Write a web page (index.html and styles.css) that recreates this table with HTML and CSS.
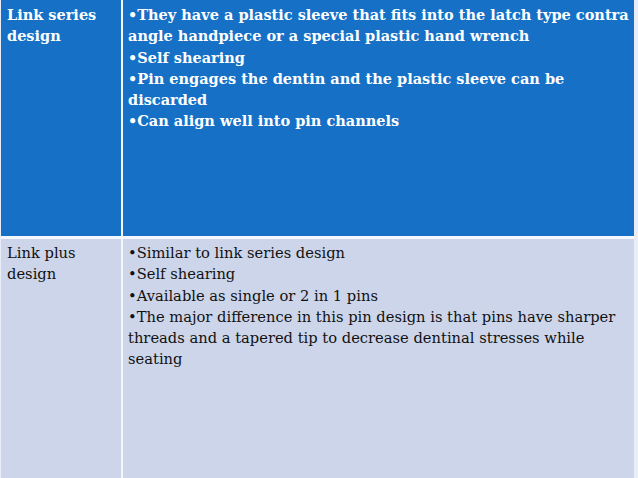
FILE: index.html
```html
<!DOCTYPE html>
<html>
<head>
<meta charset="utf-8">
<link rel="stylesheet" href="styles.css">
</head>
<body>
<div class="table">
  <div class="cell head first">Link series design</div>
  <div class="cell head">
    <div>•They have a plastic sleeve that fits into the latch type contra angle handpiece or a special plastic hand wrench</div>
    <div>•Self shearing</div>
    <div>•Pin engages the dentin and the plastic sleeve can be discarded</div>
    <div>•Can align well into pin channels</div>
  </div>
  <div class="cell body first">Link plus design</div>
  <div class="cell body">
    <div>•Similar to link series design</div>
    <div>•Self shearing</div>
    <div>•Available as single or 2 in 1 pins</div>
    <div>•The major difference in this pin design is that pins have sharper threads and a tapered tip to decrease dentinal stresses while seating</div>
  </div>
</div>
</body>
</html>
```
FILE: styles.css
```css
html, body {
  margin: 0;
  padding: 0;
  background: #e8edf7;
}
.table {
  display: grid;
  grid-template-columns: 120px 511px;
  grid-template-rows: 236px 240px;
  column-gap: 2px;
  row-gap: 3px;
  margin-left: 1px;
  width: 633px;
  background: #f4f7fc;
  font-family: "DejaVu Serif", serif;
  line-height: 21.3px;
}
.cell {
  padding: 4px 4px 0 5px;
  overflow: hidden;
}
.first {
  padding-left: 6px;
}
.head {
  background: #1570c6;
  color: #ffffff;
  font-weight: bold;
  font-size: 14.5px;
}
.body {
  background: #cdd5ea;
  color: #111;
  font-size: 14.7px;
  padding-top: 3px;
}
```
